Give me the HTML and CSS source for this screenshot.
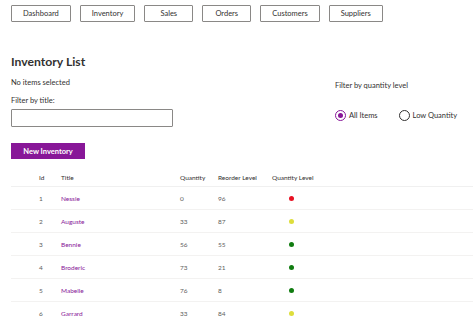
FILE: index.html
```html
<!DOCTYPE html>
<html>
<head>
    <link rel="stylesheet" href="styles.css">
</head>
<body>
    <div class="nav">
        <button class="nav-button">Dashboard</button>
        <button class="nav-button">Inventory</button>
        <button class="nav-button">Sales</button>
        <button class="nav-button">Orders</button>
        <button class="nav-button">Customers</button>
        <button class="nav-button">Suppliers</button>
    </div>

    <div class="page">
        <h2 class="title">Inventory List</h2>
        <div class="top-container">
            <div class="left-container">
                <div class="selected">No items selected</div>
                <label class="field-label" for="filterTitle">Filter by title:</label>
                <input class="input-field" type="text" id="filterTitle">
                <button class="new-button">New Inventory</button>
            </div>
            <div class="right-container">
                <div class="filter-label">Filter by quantity level</div>
                <div class="radio-group">
                    <label class="radio"><span class="radio-circle checked"></span>All Items</label>
                    <label class="radio"><span class="radio-circle"></span>Low Quantity</label>
                </div>
            </div>
        </div>

        <table class="list">
            <thead>
                <tr>
                    <th class="col-check"></th>
                    <th class="col-id">Id</th>
                    <th class="col-title">Title</th>
                    <th class="col-qty">Quantity</th>
                    <th class="col-reorder">Reorder Level</th>
                    <th class="col-level">Quantity Level</th>
                    <th></th>
                </tr>
            </thead>
            <tbody>
                <tr><td></td><td>1</td><td><a class="item-link">Nessie</a></td><td>0</td><td>96</td><td><span class="dot red"></span></td><td></td></tr>
                <tr><td></td><td>2</td><td><a class="item-link">Auguste</a></td><td>33</td><td>87</td><td><span class="dot yellow"></span></td><td></td></tr>
                <tr><td></td><td>3</td><td><a class="item-link">Bennie</a></td><td>56</td><td>55</td><td><span class="dot green"></span></td><td></td></tr>
                <tr><td></td><td>4</td><td><a class="item-link">Broderic</a></td><td>73</td><td>21</td><td><span class="dot green"></span></td><td></td></tr>
                <tr><td></td><td>5</td><td><a class="item-link">Mabelle</a></td><td>76</td><td>8</td><td><span class="dot green"></span></td><td></td></tr>
                <tr><td></td><td>6</td><td><a class="item-link">Garrard</a></td><td>33</td><td>84</td><td><span class="dot yellow"></span></td><td></td></tr>
            </tbody>
        </table>
    </div>
</body>
</html>
```

FILE: styles.css
```css
body {
    margin: 0;
    font-family: Lato, "Open Sans", sans-serif;
    color: #323130;
    background: #fff;
}

.nav {
    display: flex;
    gap: 9px;
    padding: 5px 11px 0;
}

.nav-button {
    min-width: 49px;
    height: 17px;
    padding: 0 11px;
    font-family: inherit;
    font-size: 7.5px;
    color: #323130;
    background: #fff;
    border: 1px solid #8a8886;
    border-radius: 1px;
}

.page {
    padding: 0 0 0 11px;
}

.title {
    margin: 31px 0 0;
    font-size: 12.2px;
    font-weight: 700;
    line-height: 18px;
}

.top-container {
    display: flex;
    justify-content: space-between;
}

.left-container {
    display: flex;
    flex-direction: column;
    align-items: flex-start;
}

.selected {
    margin-top: 6px;
    font-size: 7.5px;
    line-height: 12px;
}

.field-label {
    margin-top: 6px;
    font-size: 7.5px;
    line-height: 12px;
}

.input-field {
    margin-top: 2px;
    width: 162px;
    height: 18px;
    box-sizing: border-box;
    border: 1px solid #8a8886;
    border-radius: 1px;
}

.new-button {
    margin-top: 16px;
    width: 74px;
    height: 16px;
    padding: 0;
    font-family: inherit;
    font-size: 7.5px;
    font-weight: 700;
    color: #fff;
    background: #881798;
    border: none;
    cursor: pointer;
}

.right-container {
    width: 128px;
    padding-right: 11px;
}

.filter-label {
    margin-top: 9px;
    font-size: 7.5px;
    line-height: 12px;
}

.radio-group {
    display: flex;
    gap: 21px;
    margin-top: 18px;
}

.radio {
    display: flex;
    align-items: center;
    gap: 3px;
    font-size: 7.5px;
    white-space: nowrap;
}

.radio-circle {
    width: 11px;
    height: 11px;
    box-sizing: border-box;
    border: 1px solid #323130;
    border-radius: 50%;
    display: flex;
    align-items: center;
    justify-content: center;
}

.radio-circle.checked {
    border-color: #881798;
}

.radio-circle.checked::after {
    content: "";
    width: 5px;
    height: 5px;
    border-radius: 50%;
    background: #881798;
}

.list {
    margin-top: 10px;
    width: 462px;
    border-collapse: collapse;
    font-size: 6.5px;
    table-layout: fixed;
}

.list th {
    height: 17px;
    padding: 0;
    text-align: left;
    font-weight: 400;
    color: #323130;
    border-bottom: 1px solid #f0f0f0;
}

.list td {
    height: 22px;
    padding: 0;
    color: #605e5c;
    border-bottom: 1px solid #f3f2f1;
}

.col-check { width: 28px; }
.col-id { width: 22px; }
.col-title { width: 119px; }
.col-qty { width: 38px; }
.col-reorder { width: 54px; }
.col-level { width: 60px; }

.item-link {
    color: #881798;
}

.dot {
    display: block;
    width: 5px;
    height: 5px;
    margin-left: 17px;
    border-radius: 50%;
}

.red { background: #e81123; }
.yellow { background: #dede3c; }
.green { background: #107c10; }
```
